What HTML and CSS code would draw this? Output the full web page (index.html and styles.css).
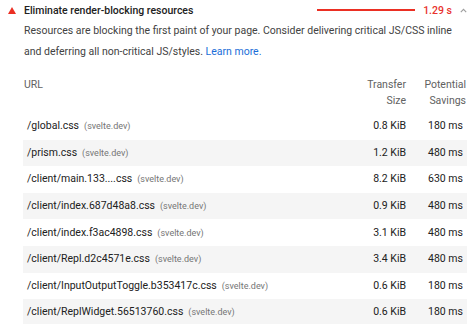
FILE: index.html
```html
<!DOCTYPE html>
<html>
<head>
<meta charset="utf-8">
<link rel="stylesheet" href="styles.css">
</head>
<body>
<div class="audit">
  <div class="audit-header">
    <svg class="tri" width="8" height="7" viewBox="0 0 8 7"><polygon points="4,0 8,7 0,7" fill="#eb2f23"/></svg>
    <span class="title">Eliminate render-blocking resources</span>
    <span class="spacer"></span>
    <span class="bar"></span>
    <span class="value">1.29 s</span>
    <svg class="chev" width="7" height="5" viewBox="0 0 7 5"><polyline points="0.8,4.2 3.5,1.4 6.2,4.2" fill="none" stroke="#9e9e9e" stroke-width="1.1"/></svg>
  </div>
  <p class="desc">Resources are blocking the first paint of your page. Consider delivering critical JS/CSS inline and deferring all non-critical JS/styles. <a class="link" href="#">Learn more.</a></p>
  <table class="tbl">
    <thead>
      <tr>
        <th class="c-url">URL</th>
        <th class="c-size">Transfer<br>Size</th>
        <th class="c-save">Potential<br>Savings</th>
      </tr>
    </thead>
    <tbody>
      <tr><td class="c-url">/global.css<span class="host">(svelte.dev)</span></td><td class="c-size">0.8 KiB</td><td class="c-save">180 ms</td></tr>
      <tr><td class="c-url">/prism.css<span class="host">(svelte.dev)</span></td><td class="c-size">1.2 KiB</td><td class="c-save">480 ms</td></tr>
      <tr><td class="c-url">/client/main.133....css<span class="host">(svelte.dev)</span></td><td class="c-size">8.2 KiB</td><td class="c-save">630 ms</td></tr>
      <tr><td class="c-url">/client/index.687d48a8.css<span class="host">(svelte.dev)</span></td><td class="c-size">0.9 KiB</td><td class="c-save">480 ms</td></tr>
      <tr><td class="c-url">/client/index.f3ac4898.css<span class="host">(svelte.dev)</span></td><td class="c-size">3.1 KiB</td><td class="c-save">480 ms</td></tr>
      <tr><td class="c-url">/client/Repl.d2c4571e.css<span class="host">(svelte.dev)</span></td><td class="c-size">3.4 KiB</td><td class="c-save">480 ms</td></tr>
      <tr><td class="c-url">/client/InputOutputToggle.b353417c.css<span class="host">(svelte.dev)</span></td><td class="c-size">0.6 KiB</td><td class="c-save">180 ms</td></tr>
      <tr><td class="c-url">/client/ReplWidget.56513760.css<span class="host">(svelte.dev)</span></td><td class="c-size">0.6 KiB</td><td class="c-save">180 ms</td></tr>
    </tbody>
  </table>
</div>
</body>
</html>
```
FILE: styles.css
```css
html, body {
  margin: 0;
  padding: 0;
  background: #fff;
}
body {
  font-family: Roboto, "Liberation Sans", sans-serif;
  font-size: 10.5px;
  color: #212121;
}
.audit {
  padding: 0 7px 0 8px;
}
.audit-header {
  display: flex;
  align-items: center;
  height: 20px;
}
.tri {
  display: block;
  margin-right: 8px;
}
.title {
  font-weight: 500;
  font-size: 10.5px;
  color: #212121;
}
.spacer {
  flex: 1;
}
.bar {
  width: 98px;
  height: 2.5px;
  background: #eb2f23;
  margin-right: 8px;
}
.value {
  color: #e8322d;
  font-weight: 500;
  margin-right: 8px;
}
.chev {
  display: block;
}
.desc {
  margin: 0 0 0 16px;
  line-height: 21px;
  color: #424242;
}
.link {
  color: #1a6ed8;
  text-decoration: none;
}
.tbl {
  margin: 15px 0 0 15px;
  width: 444px;
  border-collapse: collapse;
  border-spacing: 0;
}
.tbl th {
  font-weight: 400;
  color: #616161;
  line-height: 16px;
  padding: 0 0 4px 0;
  vertical-align: top;
}
.tbl td {
  height: 26.6px;
  padding: 0;
  line-height: 14px;
  white-space: nowrap;
}
.tbl tbody tr:nth-child(even) {
  background: #f5f5f5;
}
.c-url {
  text-align: left;
  padding-left: 4px !important;
}
th.c-url {
  padding-left: 1px !important;
}
.c-size {
  text-align: right;
  width: 54px;
  padding-right: 4px !important;
}
.c-save {
  text-align: right;
  width: 53px;
  padding-right: 4px !important;
}
th.c-save {
  padding-right: 1px !important;
}
.host {
  margin-left: 5px;
  font-size: 9px;
  color: #757575;
}
```
